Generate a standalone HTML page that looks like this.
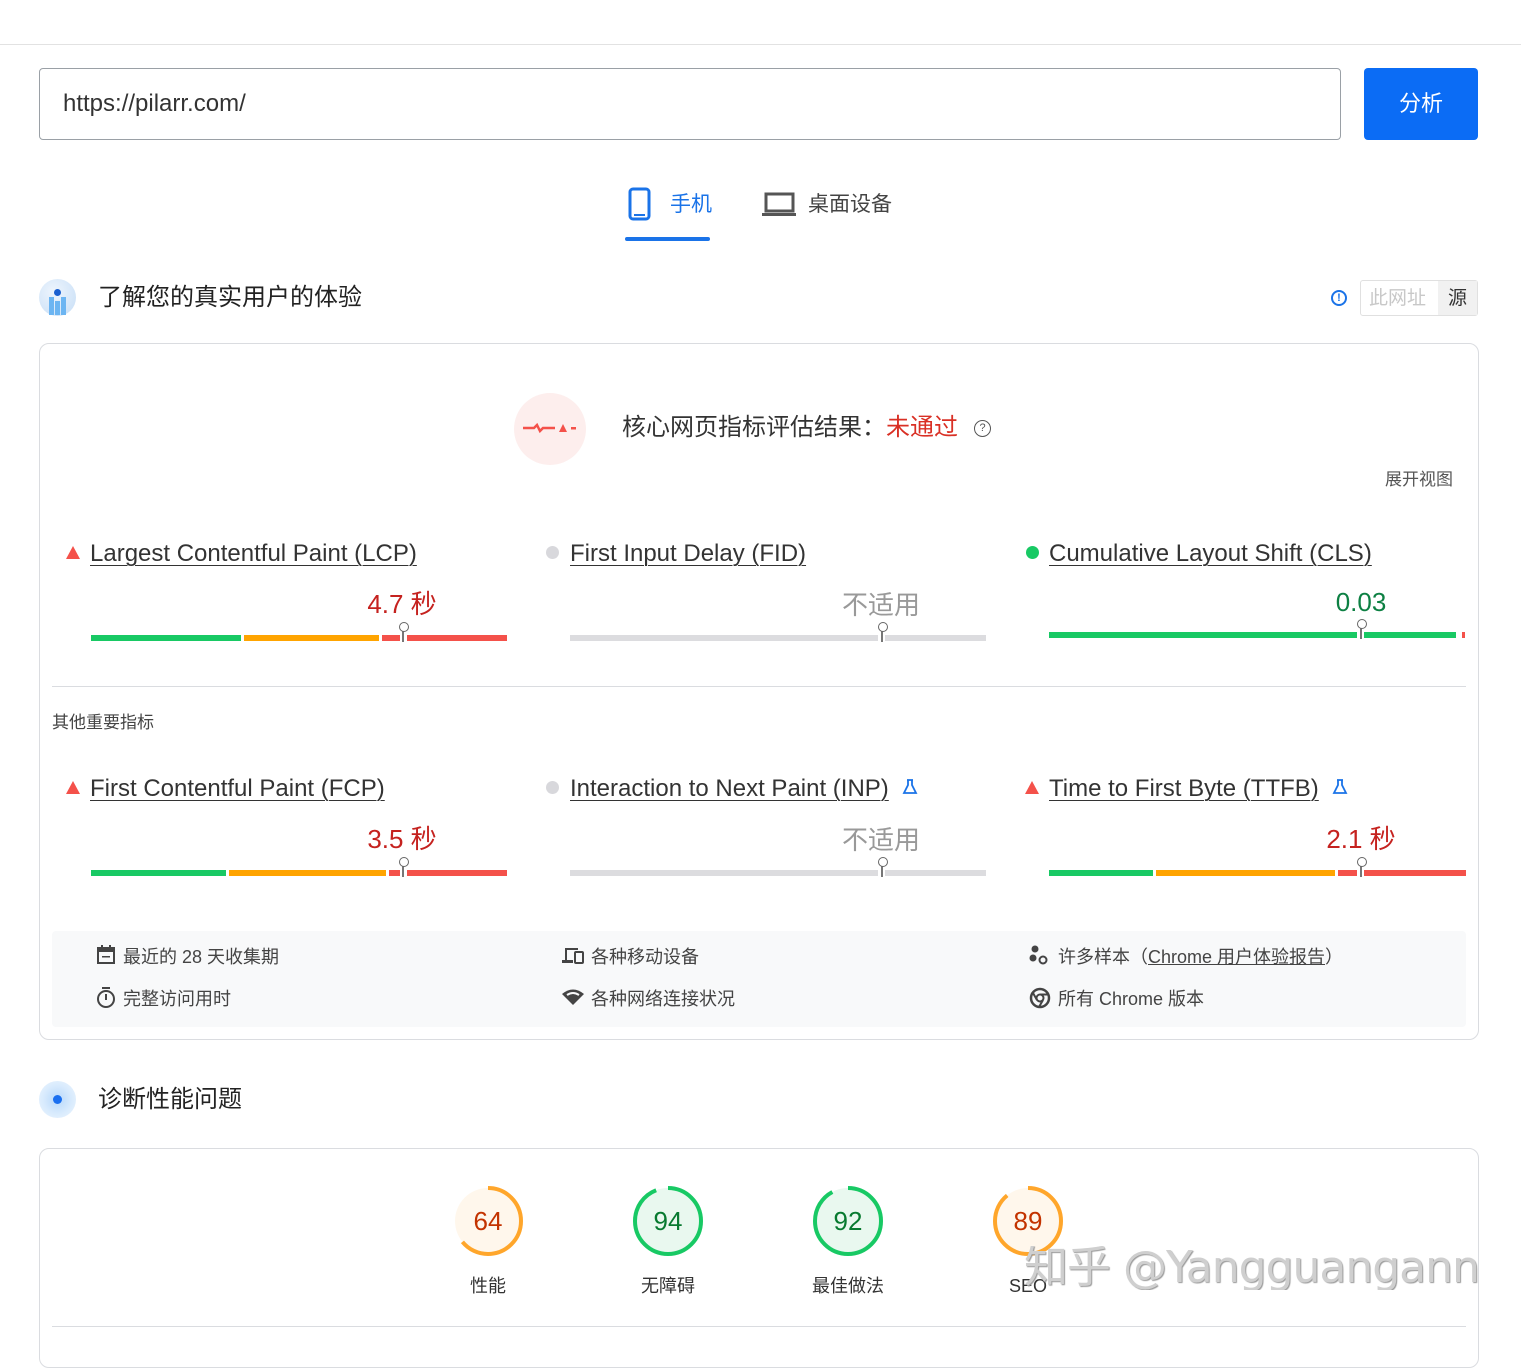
<!DOCTYPE html>
<html><head><meta charset="utf-8"><style>
*{margin:0;padding:0;box-sizing:border-box}
body{width:1521px;height:1342px;overflow:hidden;background:#fff;font-family:"Liberation Sans","Noto Sans CJK SC",sans-serif;color:#202124;position:relative}
.a{position:absolute}
.t{position:absolute;white-space:nowrap;line-height:1}
.bar{position:absolute;height:6px}
.g{background:#18c964}.o{background:#ffa400}.r{background:#f4514a}.gr{background:#dcdcdf}
.title{font-size:24px;color:#333;text-decoration:underline;text-underline-offset:4px;text-decoration-thickness:1px}
.val{font-size:26px;transform:translateX(-50%)}
.pin{position:absolute;width:2px;height:12px;background:#777}
.pin:before{content:"";position:absolute;left:-3px;top:-8px;width:8px;height:8px;border:1.5px solid #666;border-radius:50%;background:#fff}
.tri{position:absolute;width:0;height:0;border-left:7px solid transparent;border-right:7px solid transparent;border-bottom:13px solid #f4514a}
.dot{position:absolute;width:13px;height:13px;border-radius:50%}
.ft{font-size:18px;color:#444}
.gauge{position:absolute;width:72px;height:72px}
.gl{font-size:18px;color:#333;transform:translateX(-50%)}
</style></head><body>
<div class="a" style="left:0;top:44px;width:1521px;height:1px;background:#e2e2e2"></div>
<div class="a" style="left:39px;top:68px;width:1302px;height:72px;border:1px solid #9aa0a6;border-radius:4px"></div>
<div class="t" style="left:63px;top:92px;font-size:24px;color:#333">https://pilarr.com/</div>
<div class="a" style="left:1364px;top:68px;width:114px;height:72px;background:#0b6cf5;border-radius:4px"></div>
<div class="t" style="left:1399px;top:93px;font-size:22px;color:#fff">分析</div>

<svg class="a" style="left:627px;top:187px" width="26" height="35" viewBox="0 0 26 35"><rect x="3" y="2" width="19" height="30" rx="3" fill="none" stroke="#1a73e8" stroke-width="3"/><rect x="7" y="27" width="11" height="2" fill="#1a73e8"/></svg>
<div class="t" style="left:670px;top:194px;font-size:21px;color:#1a73e8">手机</div>
<div class="a" style="left:625px;top:237px;width:85px;height:4px;background:#1a73e8;border-radius:2px"></div>
<svg class="a" style="left:762px;top:192px" width="35" height="26" viewBox="0 0 35 26"><rect x="4" y="2" width="27" height="17" fill="none" stroke="#555" stroke-width="3"/><rect x="0" y="21" width="34" height="3" fill="#555"/></svg>
<div class="t" style="left:808px;top:194px;font-size:21px;color:#444">桌面设备</div>

<div class="a" style="left:39px;top:279px;width:37px;height:37px;border-radius:50%;background:radial-gradient(circle at 40% 35%,#eef5fd,#c5ddf6)"></div>
<div class="a" style="left:49px;top:297px;width:5px;height:18px;background:#6cb5f2"></div>
<div class="a" style="left:55px;top:301px;width:5px;height:14px;background:#6cb5f2"></div>
<div class="a" style="left:61px;top:297px;width:5px;height:18px;background:#6cb5f2"></div>
<div class="a" style="left:54px;top:289px;width:7px;height:7px;border-radius:50%;background:#1a5fd0"></div>
<div class="t" style="left:98px;top:286px;font-size:24px;color:#222">了解您的真实用户的体验</div>
<div class="a" style="left:1331px;top:290px;width:16px;height:16px;border:2px solid #1a73e8;border-radius:50%;color:#1a73e8;font-size:11px;font-weight:bold;text-align:center;line-height:12px">!</div>
<div class="a" style="left:1360px;top:280px;width:118px;height:36px;border:1px solid #e0e0e0;border-radius:3px"></div>
<div class="a" style="left:1438px;top:281px;width:39px;height:34px;background:#f1f1f1"></div>
<div class="t" style="left:1369px;top:289px;font-size:19px;color:#c8c8c8">此网址</div>
<div class="t" style="left:1448px;top:289px;font-size:19px;color:#333">源</div>

<div class="a" style="left:39px;top:343px;width:1440px;height:697px;border:1px solid #dadce0;border-radius:10px"></div>
<div class="a" style="left:514px;top:393px;width:72px;height:72px;border-radius:50%;background:#fdeeed"></div>
<svg class="a" style="left:522px;top:420px" width="56" height="16" viewBox="0 0 56 16"><path d="M1 8H12L15 5L18 11L21 8H33" stroke="#f4514a" stroke-width="2.5" fill="none"/><path d="M37 12L41 4L45 12Z" fill="#f4514a"/><rect x="49" y="7" width="5" height="2.5" fill="#f4514a"/></svg>
<div class="t" style="left:622px;top:416px;font-size:24px;color:#333">核心网页指标评估结果：<span style="color:#d93025">未通过</span></div>
<div class="a" style="left:974px;top:420px;width:17px;height:17px;border:1.6px solid #555;border-radius:50%;font-size:11px;text-align:center;line-height:14px;color:#555">?</div>
<div class="t" style="left:1385px;top:471px;font-size:17px;color:#555">展开视图</div>

<div class="tri" style="left:66px;top:546px"></div>
<div class="t title" style="left:90px;top:542px">Largest Contentful Paint (LCP)</div>
<div class="t val" style="left:402px;top:591px;color:#c5221f">4.7 秒</div>
<div class="bar g" style="left:91px;top:635px;width:150px"></div><div class="bar o" style="left:244px;top:635px;width:135px"></div><div class="bar r" style="left:382px;top:635px;width:18px"></div><div class="bar r" style="left:407px;top:635px;width:100px"></div>
<div class="pin" style="left:402px;top:630px"></div>

<div class="dot" style="left:546px;top:546px;background:#d8d8dc"></div>
<div class="t title" style="left:570px;top:542px">First Input Delay (FID)</div>
<div class="t val" style="left:881px;top:592px;color:#999">不适用</div>
<div class="bar gr" style="left:570px;top:635px;width:308px"></div><div class="bar gr" style="left:885px;top:635px;width:101px"></div>
<div class="pin" style="left:881px;top:630px"></div>

<div class="dot" style="left:1026px;top:546px;background:#18c964"></div>
<div class="t title" style="left:1049px;top:542px">Cumulative Layout Shift (CLS)</div>
<div class="t val" style="left:1361px;top:589px;color:#0d8043">0.03</div>
<div class="bar g" style="left:1049px;top:632px;width:308px"></div><div class="bar g" style="left:1364px;top:632px;width:92px"></div><div class="bar r" style="left:1462px;top:632px;width:3px"></div>
<div class="pin" style="left:1360px;top:627px"></div>

<div class="a" style="left:52px;top:686px;width:1414px;height:1px;background:#dadce0"></div>
<div class="t" style="left:52px;top:714px;font-size:17px;color:#444">其他重要指标</div>

<div class="tri" style="left:66px;top:781px"></div>
<div class="t title" style="left:90px;top:777px">First Contentful Paint (FCP)</div>
<div class="t val" style="left:402px;top:826px;color:#c5221f">3.5 秒</div>
<div class="bar g" style="left:91px;top:870px;width:135px"></div><div class="bar o" style="left:229px;top:870px;width:157px"></div><div class="bar r" style="left:389px;top:870px;width:11px"></div><div class="bar r" style="left:407px;top:870px;width:100px"></div>
<div class="pin" style="left:402px;top:865px"></div>

<div class="dot" style="left:546px;top:781px;background:#d8d8dc"></div>
<div class="t title" style="left:570px;top:777px">Interaction to Next Paint (INP)</div>
<svg class="a" style="left:902px;top:779px" width="16" height="16" viewBox="0 0 16 16"><path d="M5 1H11M6 1V6L2 14H14L10 6V1" fill="none" stroke="#1a73e8" stroke-width="1.8"/></svg>
<div class="t val" style="left:881px;top:827px;color:#999">不适用</div>
<div class="bar gr" style="left:570px;top:870px;width:308px"></div><div class="bar gr" style="left:885px;top:870px;width:101px"></div>
<div class="pin" style="left:881px;top:865px"></div>

<div class="tri" style="left:1025px;top:781px"></div>
<div class="t title" style="left:1049px;top:777px">Time to First Byte (TTFB)</div>
<svg class="a" style="left:1332px;top:779px" width="16" height="16" viewBox="0 0 16 16"><path d="M5 1H11M6 1V6L2 14H14L10 6V1" fill="none" stroke="#1a73e8" stroke-width="1.8"/></svg>
<div class="t val" style="left:1361px;top:826px;color:#c5221f">2.1 秒</div>
<div class="bar g" style="left:1049px;top:870px;width:104px"></div><div class="bar o" style="left:1156px;top:870px;width:179px"></div><div class="bar r" style="left:1338px;top:870px;width:19px"></div><div class="bar r" style="left:1364px;top:870px;width:102px"></div>
<div class="pin" style="left:1360px;top:865px"></div>

<div class="a" style="left:52px;top:931px;width:1414px;height:96px;background:#f8f9fa;border-radius:4px"></div>
<svg class="a" style="left:96px;top:945px" width="20" height="20" viewBox="0 0 20 20"><rect x="2" y="3" width="16" height="15" fill="none" stroke="#444" stroke-width="2"/><rect x="2" y="3" width="16" height="4" fill="#444"/><rect x="5" y="0" width="2" height="4" fill="#444"/><rect x="13" y="0" width="2" height="4" fill="#444"/><rect x="6" y="11" width="8" height="1.5" fill="#444"/></svg>
<div class="t ft" style="left:123px;top:948px">最近的 28 天收集期</div>
<svg class="a" style="left:96px;top:987px" width="20" height="22" viewBox="0 0 20 22"><rect x="6" y="0" width="8" height="2" fill="#444"/><circle cx="10" cy="12" r="8" fill="none" stroke="#444" stroke-width="2"/><rect x="9" y="7" width="2" height="6" fill="#444"/></svg>
<div class="t ft" style="left:123px;top:990px">完整访问用时</div>
<svg class="a" style="left:561px;top:946px" width="24" height="18" viewBox="0 0 24 18"><path d="M4 2H17V4H6V14H4Z M1 14H12V17H1Z" fill="#444"/><rect x="14" y="6" width="8" height="11" rx="1" fill="none" stroke="#444" stroke-width="2"/></svg>
<div class="t ft" style="left:591px;top:948px">各种移动设备</div>
<svg class="a" style="left:561px;top:988px" width="24" height="18" viewBox="0 0 24 18"><path d="M1 6Q12 -3 23 6L12 17Z" fill="#444"/><path d="M6 7Q12 3 18 7" stroke="#f8f9fa" stroke-width="2" fill="none"/></svg>
<div class="t ft" style="left:591px;top:990px">各种网络连接状况</div>
<svg class="a" style="left:1029px;top:945px" width="22" height="20" viewBox="0 0 22 20"><circle cx="6" cy="4" r="3.5" fill="#444"/><circle cx="4" cy="13" r="3.5" fill="#444"/><circle cx="14" cy="15" r="3.5" fill="none" stroke="#444" stroke-width="2"/></svg>
<div class="t ft" style="left:1058px;top:948px">许多样本（<span style="text-decoration:underline">Chrome 用户体验报告</span>）</div>
<svg class="a" style="left:1029px;top:987px" width="22" height="22" viewBox="0 0 22 22"><circle cx="11" cy="11" r="9" fill="none" stroke="#444" stroke-width="2.5"/><circle cx="11" cy="11" r="3.5" fill="none" stroke="#444" stroke-width="2"/><path d="M11 7.5H19M8 13L4 6M14 13L10 20" stroke="#444" stroke-width="2"/></svg>
<div class="t ft" style="left:1058px;top:990px">所有 Chrome 版本</div>

<div class="a" style="left:39px;top:1081px;width:37px;height:37px;border-radius:50%;background:radial-gradient(circle,#b7d8fb 0,#d9ebfd 55%,#eef6fe 100%)"></div>
<div class="a" style="left:53px;top:1095px;width:9px;height:9px;border-radius:50%;background:#1a6ff0"></div>
<div class="t" style="left:98px;top:1088px;font-size:24px;color:#222">诊断性能问题</div>

<div class="a" style="left:39px;top:1148px;width:1440px;height:220px;border:1px solid #dadce0;border-radius:10px"></div>
<svg class="gauge" style="left:452px;top:1185px" viewBox="0 0 72 72"><circle cx="36" cy="36" r="33" fill="#fff7ec"/><circle cx="36" cy="36" r="33" fill="none" stroke="#ffa62b" stroke-width="4" stroke-dasharray="132.7 207.3" transform="rotate(-90 36 36)"/></svg>
<div class="t" style="left:488px;top:1208px;font-size:26px;color:#c33300;transform:translateX(-50%)">64</div>
<svg class="gauge" style="left:632px;top:1185px" viewBox="0 0 72 72"><circle cx="36" cy="36" r="33" fill="#e9f8ef"/><circle cx="36" cy="36" r="33" fill="none" stroke="#18c964" stroke-width="4" stroke-dasharray="194.9 207.3" transform="rotate(-90 36 36)"/></svg>
<div class="t" style="left:668px;top:1208px;font-size:26px;color:#087a30;transform:translateX(-50%)">94</div>
<svg class="gauge" style="left:812px;top:1185px" viewBox="0 0 72 72"><circle cx="36" cy="36" r="33" fill="#e9f8ef"/><circle cx="36" cy="36" r="33" fill="none" stroke="#18c964" stroke-width="4" stroke-dasharray="190.7 207.3" transform="rotate(-90 36 36)"/></svg>
<div class="t" style="left:848px;top:1208px;font-size:26px;color:#087a30;transform:translateX(-50%)">92</div>
<svg class="gauge" style="left:992px;top:1185px" viewBox="0 0 72 72"><circle cx="36" cy="36" r="33" fill="#fff7ec"/><circle cx="36" cy="36" r="33" fill="none" stroke="#ffa62b" stroke-width="4" stroke-dasharray="184.5 207.3" transform="rotate(-90 36 36)"/></svg>
<div class="t" style="left:1028px;top:1208px;font-size:26px;color:#c33300;transform:translateX(-50%)">89</div>
<div class="t gl" style="left:488px;top:1277px">性能</div>
<div class="t gl" style="left:668px;top:1277px">无障碍</div>
<div class="t gl" style="left:848px;top:1277px">最佳做法</div>
<div class="t gl" style="left:1028px;top:1277px">SEO</div>
<div class="a" style="left:52px;top:1326px;width:1414px;height:1px;background:#dadce0"></div>
<div class="t" style="left:1024px;top:1246px;font-size:44px;color:#cfcfcf;text-shadow:1px 1px 1px #999;font-family:'DejaVu Sans','Noto Sans CJK SC',sans-serif;letter-spacing:-1px;width:455px;overflow:hidden">知乎 @Yangguangann</div>
</body></html>
